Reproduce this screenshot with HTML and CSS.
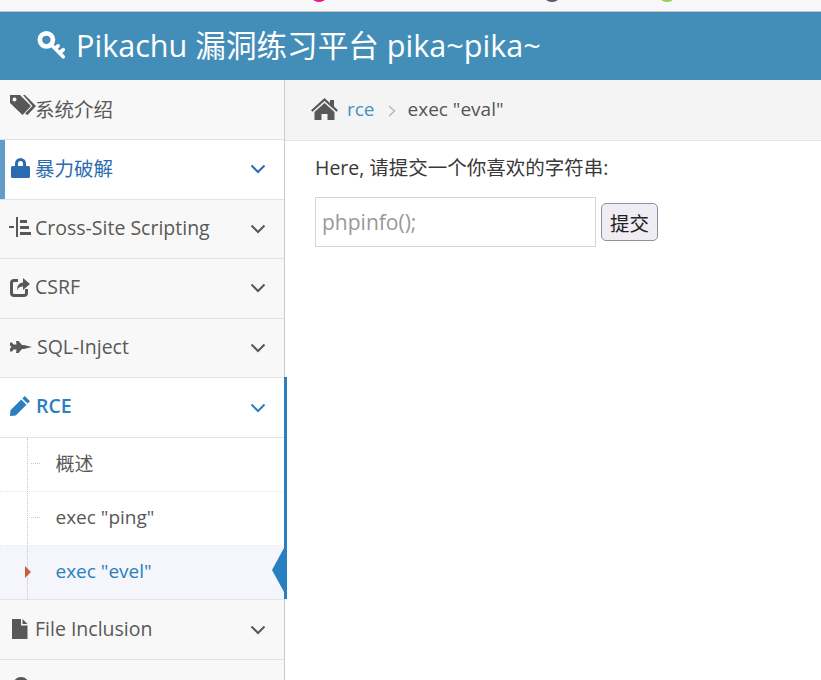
FILE: index.html
```html
<!DOCTYPE html>
<html lang="zh">
<head>
<meta charset="utf-8">
<title>Pikachu</title>
<link rel="stylesheet" href="styles.css">
</head>
<body>
<div class="strip"><i class="dot dot-pink"></i><i class="dot dot-gray"></i><i class="dot dot-green"></i></div>
<header class="brand">
  <svg class="key" viewBox="0 0 32 32"><circle cx="10" cy="10.500" r="7" fill="none" stroke="#fff" stroke-width="5"/><path d="M15 15.500 28 28.500M24 24.500l4-3.500M19.500 20l3-3" fill="none" stroke="#fff" stroke-width="4" stroke-linecap="round"/></svg>
  <span>Pikachu 漏洞练习平台 pika~pika~</span>
</header>
<div class="layout">
  <nav class="side">
    <a class="item">
      <svg class="ico ico-tag" viewBox="0 0 26 20"><path d="M0 0h10l11 11-8.500 9L0 8zM4.500 2.500a2 2 0 1 0 .01 0z" fill="#585858" fill-rule="evenodd"/><path d="M13 0h2l11 11-8.500 9-2.500-1.500L22.500 11z" fill="#585858"/></svg>
      <span class="label">系统介绍</span>
    </a>
    <a class="item item-open item-lock">
      <svg class="ico ico-lock" viewBox="0 0 19 20"><path d="M1.500 8H4V5.500a5.500 5.500 0 0 1 11 0V8h2.500A1.500 1.500 0 0 1 19 9.500v9a1.500 1.500 0 0 1-1.500 1.500h-16A1.500 1.500 0 0 1 0 18.500v-9A1.500 1.500 0 0 1 1.500 8zM7 8h5V5.500a2.500 2.500 0 0 0-5 0z" fill="#2b6cb0" fill-rule="evenodd"/></svg>
      <span class="label">暴力破解</span>
      <svg class="chev" viewBox="0 0 16 10"><path d="M1.500 1.500 8 8l6.500-6.500"/></svg>
    </a>
    <a class="item">
      <svg class="ico ico-tree" viewBox="0 0 22 20"><path d="M0 9h5v2H0zM7 0h2v20H7zM11 3h7v3h-7zM11 9h9v3h-9zM11 15h11v3H11z" fill="#585858"/></svg>
      <span class="label">Cross-Site Scripting</span>
      <svg class="chev" viewBox="0 0 16 10"><path d="M1.500 1.500 8 8l6.500-6.500"/></svg>
    </a>
    <a class="item">
      <svg class="ico" viewBox="0 0 20 20"><path d="M15 12v4a1 1 0 0 1-1 1H4a1 1 0 0 1-1-1V6a1 1 0 0 1 1-1h4V2H4a4 4 0 0 0-4 4v10a4 4 0 0 0 4 4h10a4 4 0 0 0 4-4v-4z" fill="#585858"/><path d="M13 1l7 6-7 6V9.500c-3 0-5 1-6 4 0-5 2-7.500 6-8z" fill="#585858"/></svg>
      <span class="label">CSRF</span>
      <svg class="chev" viewBox="0 0 16 10"><path d="M1.500 1.500 8 8l6.500-6.500"/></svg>
    </a>
    <a class="item">
      <svg class="ico ico-jet" viewBox="0 0 22 12"><path d="M0 1.500h2L3.500 3.500h3L6 0h2.500L12 4h2l8 2-8 2h-2L8.500 12H6l.5-3.500h-3L2 10.500H0V7.500L1.500 6 0 4.500z" fill="#585858"/></svg>
      <span class="label">SQL-Inject</span>
      <svg class="chev" viewBox="0 0 16 10"><path d="M1.500 1.500 8 8l6.500-6.500"/></svg>
    </a>
    <a class="item item-open item-rce">
      <svg class="ico" viewBox="0 0 21 21"><path d="M15.500 0 21 5.500l-2.500 2.500L13 2.500zM11.800 3.700l5.500 5.500L6 20.500.5 21l-.5-.5.500-5.500z" fill="#2a7fc0"/></svg>
      <span class="label label-bold">RCE</span>
      <svg class="chev" viewBox="0 0 16 10"><path d="M1.500 1.500 8 8l6.500-6.500"/></svg>
    </a>
    <ul class="sub">
      <li class="sub-item"><span>概述</span></li>
      <li class="sub-item"><span>exec "ping"</span></li>
      <li class="sub-item sub-active"><span>exec "evel"</span></li>
    </ul>
    <a class="item item-file">
      <svg class="ico ico-file" viewBox="0 0 16 20"><path d="M0 0h9v6.500h6.500V20H0zM10.500 0l5 5h-5z" fill="#585858"/></svg>
      <span class="label">File Inclusion</span>
      <svg class="chev" viewBox="0 0 16 10"><path d="M1.500 1.500 8 8l6.500-6.500"/></svg>
    </a>
    <a class="item item-last">
      <svg class="ico ico-last" viewBox="0 0 16 20"><path d="M8 0c3 0 5 1 6.500 3.500V20h-13V3.500C3 1 5 0 8 0z" fill="#585858"/></svg>
    </a>
  </nav>
  <main class="main">
    <div class="crumbs">
      <svg class="home" viewBox="0 0 27 22"><path d="M13.500 0 19 5V2h4v6.500l4 3.700-1.500 1.500L13.500 3 1.500 13.700 0 12.200z" fill="#585858"/><path d="M13.500 5 23.500 14v8h-7v-6h-6v6h-7v-8z" fill="#585858"/></svg>
      <a class="crumb-link">rce</a>
      <svg class="sep" viewBox="0 0 8 12"><path d="M1 1l5.500 5L1 11"/></svg>
      <span class="crumb-here">exec "eval"</span>
    </div>
    <div class="content">
      <p class="prompt">Here, 请提交一个你喜欢的字符串:</p>
      <form class="form">
        <input class="field" type="text" placeholder="phpinfo();">
        <button class="btn" type="button">提交</button>
      </form>
    </div>
  </main>
</div>
</body>
</html>
```
FILE: styles.css
```css
* { box-sizing: border-box; }
html, body { margin: 0; height: 680px; overflow: hidden; background: #fff; }
body {
  font-family: "Open Sans", "Noto Sans CJK SC", sans-serif;
  font-size: 19.500px;
  color: #393939;
}
.strip {
  height: 12px;
  background: #f8f8fb;
  border-bottom: 1px solid #c4c6c8;
  position: relative;
}
.dot { position: absolute; top: -4px; width: 12px; height: 6px; border-radius: 50%; }
.dot-pink { left: 313px; background: #f0148c; }
.dot-gray { left: 546px; background: #5a5a66; }
.dot-green { left: 661px; background: #93d34f; }
.brand {
  height: 68px;
  background: #438eb9;
  color: #fff;
  display: flex;
  align-items: center;
  padding: 0 0 4px 37px;
  font-size: 30.600px;
}
.key { width: 30px; height: 30px; margin: 2px 9px 0 0; flex: none; }
.layout { display: flex; height: 600px; overflow: hidden; }
.side {
  width: 285px;
  flex: none;
  background: #f8f8f8;
  border-right: 1px solid #ccc;
  display: flex;
  flex-direction: column;
  padding-top: 0.340px;
}
.item {
  flex: none;
  height: 59.600px;
  padding: 0 18px 3px 10px;
  display: flex;
  align-items: center;
  color: #585858;
  border-bottom: 1px solid #e3e3e3;
  position: relative;
}
.ico { width: 20px; height: 20px; flex: none; margin-right: 5px; }
.ico-tag { width: 26px; height: 20px; margin-right: -1px; margin-top: -6px; }
.ico-lock { width: 19px; margin-left: 1px; margin-right: 5px; }
.ico-tree { width: 22px; margin-left: -1px; margin-right: 4px; }
.ico-jet { width: 22px; height: 12px; margin-right: 5px; }
.ico-file { width: 16px; margin-left: 2px; margin-right: 7px; }
.ico-last { width: 16px; margin-left: 3px; }
.label { flex: 1; }
.label-bold { font-weight: 600; margin: 0 0 2px 1px; }
.chev { width: 16px; height: 10px; margin-top: 3px; fill: none; stroke: #585858; stroke-width: 2; flex: none; }
.item-open { background: #fff; }
.item-open .label { color: #2b6cb0; }
.item-open .chev { stroke: #2b6cb0; }
.item-lock::before {
  content: "";
  position: absolute;
  left: 0; top: 0; bottom: 0;
  width: 5px;
  background: #629cc9;
}
.item-rce .label { color: #2a7fc0; }
.item-rce .chev { stroke: #2a7fc0; }
.item-rce::after, .sub::after {
  content: "";
  position: absolute;
  right: -3px;
  width: 3px;
  background: #2a7fc0;
  z-index: 1;
}
.item-rce::after { top: -1px; bottom: -1px; }
.item-file { height: 60px; padding-bottom: 1px; }
.item-last { align-items: flex-start; padding-top: 17px; }
.sub { margin: 0; padding: 0; list-style: none; position: relative; background: #fff; flex: none; }
.sub::after { top: 0; bottom: 1px; }
.sub::before {
  content: "";
  position: absolute;
  left: 27px; top: 0; bottom: 0;
  border-left: 1px dotted #c4c9d0;
  z-index: 1;
}
.sub-item {
  height: 54px;
  padding: 0 0 3px 55.500px;
  display: flex;
  align-items: center;
  font-size: 19px;
  color: #585858;
  border-bottom: 1px dotted #e8e8e8;
  position: relative;
}
.sub-item:last-child { border-bottom: 1px solid #e3e3e3; }
.sub-item::before {
  content: "";
  position: absolute;
  left: 31px; top: 25px;
  width: 9px;
  border-top: 1px dotted #c4c9d0;
}
.sub-active { background: #f4f6fb; color: #2a7fc0; }
.sub-active::before {
  left: 25px; top: 20px; width: 0;
  border-top: 6px solid transparent;
  border-bottom: 6px solid transparent;
  border-left: 6px solid #c86139;
  z-index: 2;
}
.sub-active::after {
  content: "";
  position: absolute;
  right: 0; top: 2px;
  border-top: 22px solid transparent;
  border-bottom: 22px solid transparent;
  border-right: 12px solid #2a7fc0;
}
.main { flex: 1; min-width: 0; }
.crumbs {
  height: 61px;
  background: #f4f4f4;
  border-bottom: 1px solid #e5e5e5;
  padding: 0 0 2px 26px;
  display: flex;
  align-items: center;
  font-size: 19px;
  color: #555;
}
.home { width: 27px; height: 22px; margin-right: 9px; flex: none; }
.crumb-link { color: #4c8fbd; }
.sep { width: 8px; height: 12px; margin: 3px 12px 0 13px; fill: none; stroke: #b8b8b8; stroke-width: 1.500; flex: none; }
.content { padding: 11px 0 0 30px; }
.prompt { margin: 0 0 16px; }
.form { display: flex; align-items: center; gap: 5px; }
.field {
  width: 281px;
  height: 50px;
  border: 1px solid #d5d5d5;
  padding: 0 6px;
  font: inherit;
  font-size: 21px;
  color: #393939;
  background: #fff;
}
.field::placeholder { color: #999; opacity: 1; }
.btn {
  width: 57px;
  height: 38px;
  padding: 0;
  font: inherit;
  color: #222;
  background: #efedf3;
  border: 1px solid #8f8f9d;
  border-radius: 5px;
}
```
